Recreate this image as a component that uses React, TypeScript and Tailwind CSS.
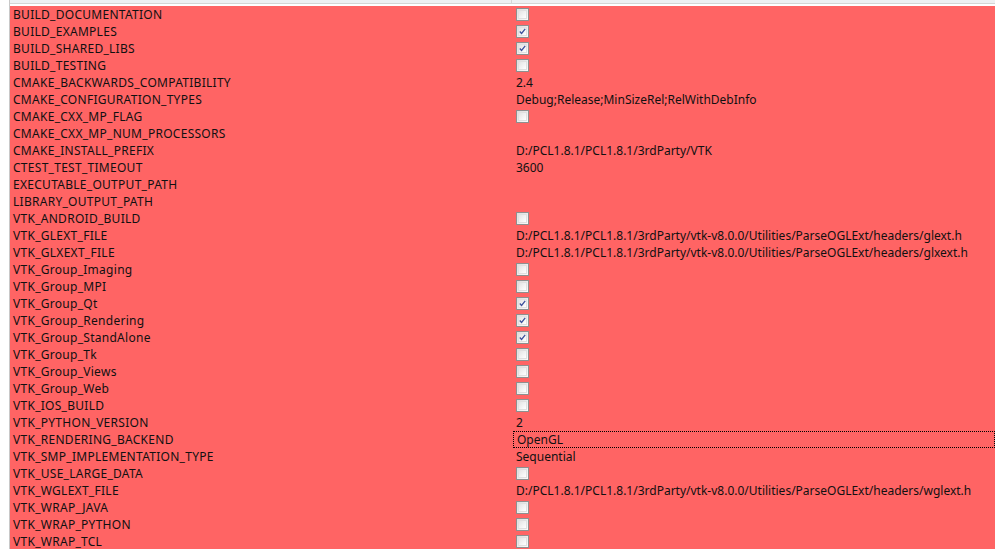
import React from "react";

type Entry = { name: string; value: boolean | string };

const GLEXT = "D:/PCL1.8.1/PCL1.8.1/3rdParty/vtk-v8.0.0/Utilities/ParseOGLExt/headers/";

const ENTRIES: Entry[] = [
  { name: "BUILD_DOCUMENTATION", value: false },
  { name: "BUILD_EXAMPLES", value: true },
  { name: "BUILD_SHARED_LIBS", value: true },
  { name: "BUILD_TESTING", value: false },
  { name: "CMAKE_BACKWARDS_COMPATIBILITY", value: "2.4" },
  { name: "CMAKE_CONFIGURATION_TYPES", value: "Debug;Release;MinSizeRel;RelWithDebInfo" },
  { name: "CMAKE_CXX_MP_FLAG", value: false },
  { name: "CMAKE_CXX_MP_NUM_PROCESSORS", value: "" },
  { name: "CMAKE_INSTALL_PREFIX", value: "D:/PCL1.8.1/PCL1.8.1/3rdParty/VTK" },
  { name: "CTEST_TEST_TIMEOUT", value: "3600" },
  { name: "EXECUTABLE_OUTPUT_PATH", value: "" },
  { name: "LIBRARY_OUTPUT_PATH", value: "" },
  { name: "VTK_ANDROID_BUILD", value: false },
  { name: "VTK_GLEXT_FILE", value: GLEXT + "glext.h" },
  { name: "VTK_GLXEXT_FILE", value: GLEXT + "glxext.h" },
  { name: "VTK_Group_Imaging", value: false },
  { name: "VTK_Group_MPI", value: false },
  { name: "VTK_Group_Qt", value: true },
  { name: "VTK_Group_Rendering", value: true },
  { name: "VTK_Group_StandAlone", value: true },
  { name: "VTK_Group_Tk", value: false },
  { name: "VTK_Group_Views", value: false },
  { name: "VTK_Group_Web", value: false },
  { name: "VTK_IOS_BUILD", value: false },
  { name: "VTK_PYTHON_VERSION", value: "2" },
  { name: "VTK_RENDERING_BACKEND", value: "OpenGL" },
  { name: "VTK_SMP_IMPLEMENTATION_TYPE", value: "Sequential" },
  { name: "VTK_USE_LARGE_DATA", value: false },
  { name: "VTK_WGLEXT_FILE", value: GLEXT + "wglext.h" },
  { name: "VTK_WRAP_JAVA", value: false },
  { name: "VTK_WRAP_PYTHON", value: false },
  { name: "VTK_WRAP_TCL", value: false },
];

const FOCUSED = "VTK_RENDERING_BACKEND";

function CheckBox({ checked }: { checked: boolean }) {
  return (
    <div className="w-[13px] h-[13px] border border-[#8e8f8f] bg-gradient-to-br from-[#dcdcdc] to-[#fbfbfb] p-[1px]">
      <div className="w-full h-full border border-[#e0e0e0] bg-gradient-to-br from-[#e4e4e4] to-[#ffffff] flex items-center justify-center">
        {checked && (
          <svg width="9" height="9" viewBox="0 0 9 9">
            <path d="M1 4.5 L3.3 7 L8 1" fill="none" stroke="#3c4f9b" strokeWidth="1.6" />
          </svg>
        )}
      </div>
    </div>
  );
}

export default function App() {
  return (
    <div
      className="w-[995px] h-[549px] overflow-hidden bg-white flex text-[12px] text-[#111]"
      style={{ fontFamily: '"Noto Sans", "Liberation Sans", sans-serif' }}
    >
      <div className="w-[10px] shrink-0 bg-white border-r border-[#c8c8c8]" />
      <div className="flex-1 flex flex-col min-w-0">
        {/* header strip */}
        <div className="h-[6px] shrink-0 flex bg-[#eef0f2] border-b-2 border-b-white">
          <div className="w-[502px] border-r border-[#d5d5d5] border-b border-b-[#d5d5d5]" />
          <div className="flex-1 border-b border-b-[#d5d5d5]" />
        </div>
        <div className="flex-1 bg-[#ff6464]">
          {ENTRIES.map((e) => (
            <div key={e.name} className="h-[17px] flex items-center leading-[17px]">
              <div className="w-[503px] shrink-0 pl-[3px] whitespace-nowrap tracking-[0.28px]">
                {e.name}
              </div>
              <div
                className={`flex-1 h-full flex items-center pl-[3px] whitespace-nowrap ${
                  e.name === FOCUSED ? "border border-dotted border-black" : ""
                }`}
              >
                {typeof e.value === "boolean" ? <CheckBox checked={e.value} /> : e.value}
              </div>
            </div>
          ))}
        </div>
      </div>
    </div>
  );
}
